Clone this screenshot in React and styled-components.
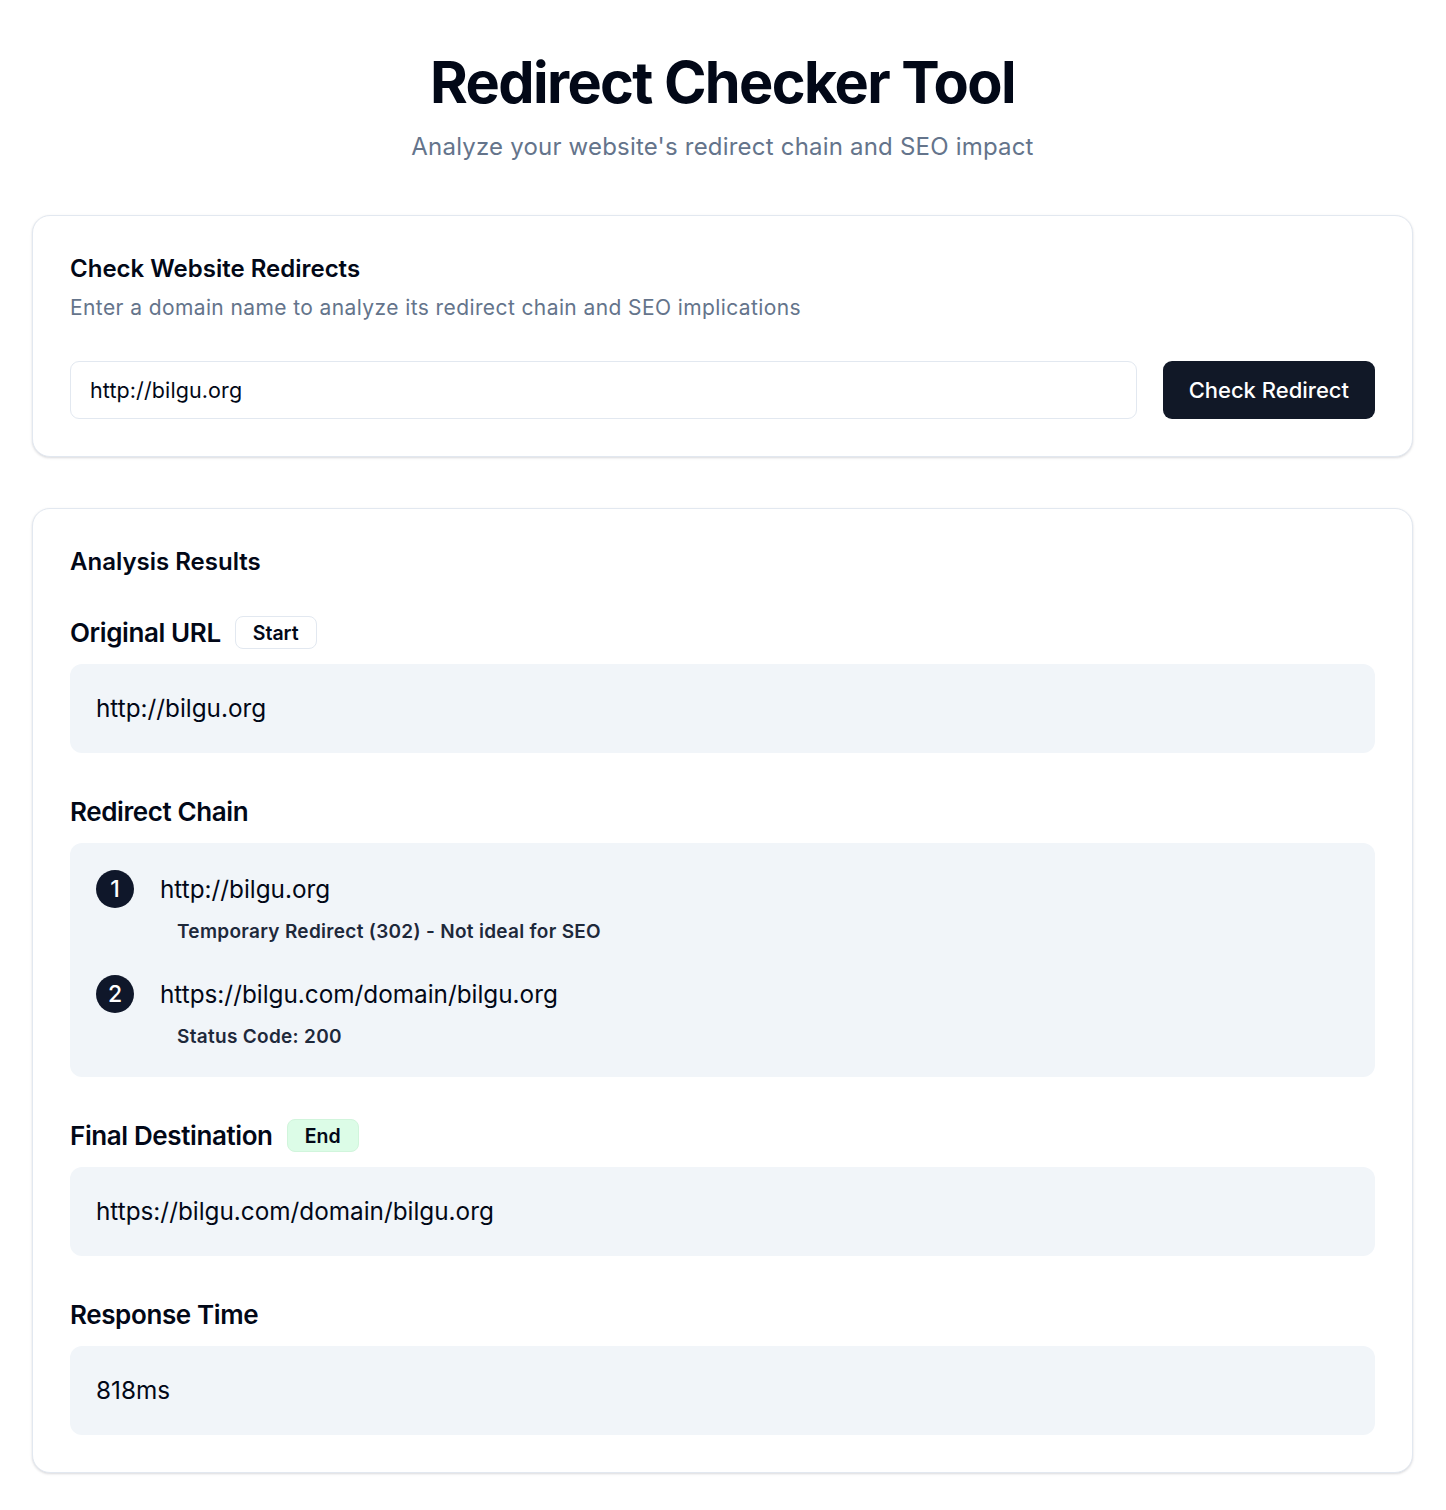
import React from "react";
import styled, { createGlobalStyle } from "styled-components";

// colors
const ink = "#020817";
const muted = "#64748b";
const line = "#e2e8f0";
const soft = "#f1f5f9";

const GlobalStyle = createGlobalStyle`
  * { box-sizing: border-box; }
  body {
    margin: 0;
    background: #ffffff;
    color: ${ink};
    font-family: Inter, "Noto Sans", "Liberation Sans", sans-serif;
  }
`;

const Page = styled.div`
  max-width: 1446px;
  margin: 0 auto;
  padding: 48px 33px 36px 32px;
`;

const Header = styled.header`
  text-align: center;
  margin-bottom: 52px;
`;

const Title = styled.h1`
  margin: 0;
  font-size: 57.6px;
  line-height: 1.2;
  font-weight: 700;
  letter-spacing: -0.028em;
  color: ${ink};
`;

const Subtitle = styled.p`
  margin: 14px 0 0;
  font-size: 24px;
  line-height: 32px;
  letter-spacing: 0.2px;
  color: ${muted};
`;

const Card = styled.section`
  border: 1px solid ${line};
  border-radius: 18px;
  background: #fff;
  box-shadow: 0 1px 3px rgba(15, 23, 42, 0.1), 0 1px 2px rgba(15, 23, 42, 0.06);
  padding: 37px;
  & + & {
    margin-top: 51px;
  }
`;

const CardTitle = styled.h2`
  margin: 0;
  font-size: 24px;
  line-height: 32px;
  font-weight: 600;
`;

const CardDesc = styled.p`
  margin: 8px 0 0;
  font-size: 21px;
  line-height: 30px;
  letter-spacing: 0.4px;
  color: ${muted};
`;

const Form = styled.form`
  display: flex;
  gap: 26px;
  margin-top: 38px;
`;

const Input = styled.input`
  flex: 1;
  height: 57.6px;
  border: 1px solid ${line};
  border-radius: 9px;
  padding: 0 19px;
  font-family: inherit;
  font-size: 21.5px;
  letter-spacing: 0.1px;
  color: ${ink};
  background: #fff;
  outline: none;
`;

const Button = styled.button`
  height: 57.6px;
  padding: 0 26px;
  border: none;
  border-radius: 9px;
  background: #111827;
  color: #fff;
  font-family: inherit;
  font-size: 22px;
  font-weight: 500;
  cursor: pointer;
`;

const Section = styled.div`
  margin-top: ${(p) => p.$top || 42}px;
`;

const SectionHead = styled.div`
  display: flex;
  align-items: center;
  gap: 14px;
  margin-bottom: 14px;
`;

const SectionTitle = styled.h3`
  margin: 0;
  font-size: 26px;
  line-height: 34px;
  font-weight: 600;
  letter-spacing: -0.015em;
`;

const Badge = styled.span`
  display: inline-flex;
  align-items: center;
  height: 33px;
  padding: 0 17px;
  border-radius: 8px;
  border: 1px solid ${(p) => (p.$green ? "#d1f5dc" : line)};
  background: ${(p) => (p.$green ? "#dcfce7" : "#fff")};
  font-size: 19.5px;
  font-weight: 600;
  color: ${ink};
`;

const ValueBox = styled.div`
  background: ${soft};
  border-radius: 12px;
  padding: 28px 26px;
  font-size: 24.3px;
  line-height: 33px;
  color: ${ink};
`;

const ChainBox = styled.div`
  background: ${soft};
  border-radius: 12px;
  padding: 27px 26px 27px;
  display: flex;
  flex-direction: column;
  gap: 30px;
`;

const Step = styled.div`
  display: grid;
  grid-template-columns: 38px 1fr;
  column-gap: 26px;
  row-gap: 10px;
  align-items: center;
`;

const StepNum = styled.span`
  width: 38px;
  height: 38px;
  border-radius: 50%;
  background: #0f172a;
  color: #fff;
  display: flex;
  align-items: center;
  justify-content: center;
  font-size: 23px;
  font-weight: 500;
`;

const StepUrl = styled.span`
  font-size: 24.3px;
  line-height: 34px;
`;

const StepNote = styled.span`
  grid-column: 2;
  padding-left: 17px;
  font-size: 19px;
  line-height: 27px;
  letter-spacing: 0.3px;
  font-weight: 600;
  color: #1e293b;
`;

const chain = [
  { url: "http://bilgu.org", note: "Temporary Redirect (302) - Not ideal for SEO" },
  { url: "https://bilgu.com/domain/bilgu.org", note: "Status Code: 200" },
];

export default function App() {
  return (
    <>
      <GlobalStyle />
      <Page>
        <Header>
          <Title>Redirect Checker Tool</Title>
          <Subtitle>Analyze your website's redirect chain and SEO impact</Subtitle>
        </Header>

        <Card>
          <CardTitle>Check Website Redirects</CardTitle>
          <CardDesc>Enter a domain name to analyze its redirect chain and SEO implications</CardDesc>
          <Form onSubmit={(e) => e.preventDefault()}>
            <Input defaultValue="http://bilgu.org" />
            <Button type="submit">Check Redirect</Button>
          </Form>
        </Card>

        <Card>
          <CardTitle>Analysis Results</CardTitle>

          <Section $top={38}>
            <SectionHead>
              <SectionTitle>Original URL</SectionTitle>
              <Badge>Start</Badge>
            </SectionHead>
            <ValueBox>http://bilgu.org</ValueBox>
          </Section>

          <Section>
            <SectionHead>
              <SectionTitle>Redirect Chain</SectionTitle>
            </SectionHead>
            <ChainBox>
              {chain.map((s, i) => (
                <Step key={i}>
                  <StepNum>{i + 1}</StepNum>
                  <StepUrl>{s.url}</StepUrl>
                  <StepNote>{s.note}</StepNote>
                </Step>
              ))}
            </ChainBox>
          </Section>

          <Section>
            <SectionHead>
              <SectionTitle>Final Destination</SectionTitle>
              <Badge $green>End</Badge>
            </SectionHead>
            <ValueBox>https://bilgu.com/domain/bilgu.org</ValueBox>
          </Section>

          <Section>
            <SectionHead>
              <SectionTitle>Response Time</SectionTitle>
            </SectionHead>
            <ValueBox>818ms</ValueBox>
          </Section>
        </Card>
      </Page>
    </>
  );
}
